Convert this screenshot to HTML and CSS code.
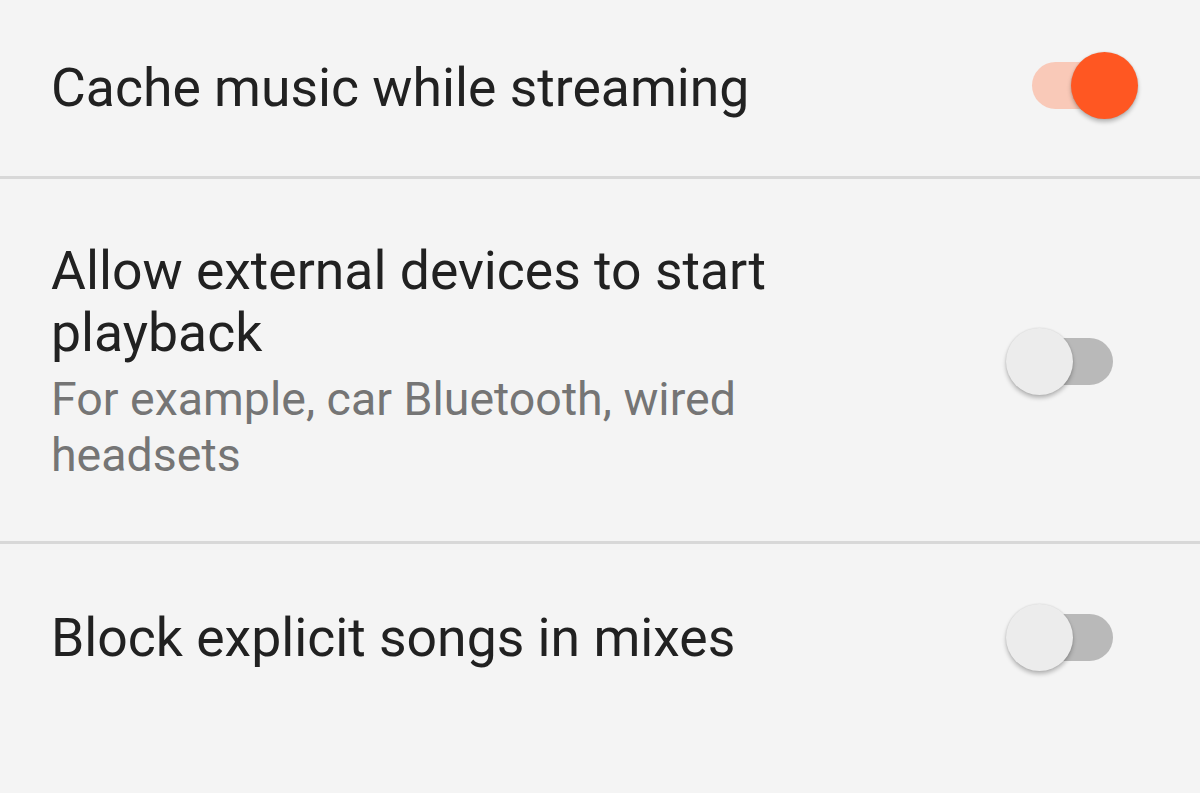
FILE: index.html
```html
<!DOCTYPE html>
<html lang="en">

<head>
    <meta charset="UTF-8">
    <meta name="viewport" content="width=device-width, initial-scale=1.0">
    <title>Settings</title>
    <link rel="stylesheet" href="styles.css">
</head>

<body>
    <div class="settings">
        <div class="setting">
            <div class="setting-text">
                <div class="setting-title">Cache music while streaming</div>
            </div>
            <div class="switch on"><span class="track"></span><span class="thumb"></span></div>
        </div>

        <div class="setting double">
            <div class="setting-text">
                <div class="setting-title">Allow external devices to start playback</div>
                <div class="setting-summary">For example, car Bluetooth, wired headsets</div>
            </div>
            <div class="switch"><span class="track"></span><span class="thumb"></span></div>
        </div>

        <div class="setting">
            <div class="setting-text">
                <div class="setting-title">Block explicit songs in mixes</div>
            </div>
            <div class="switch"><span class="track"></span><span class="thumb"></span></div>
        </div>
    </div>
</body>

</html>
```

FILE: styles.css
```css
body {
    font-family: Roboto, "Noto Sans", sans-serif;
    margin: 0;
    background-color: #f4f4f4;
    height: 100vh;
    overflow: hidden;
}

.setting {
    display: flex;
    align-items: center;
    padding: 57px 62px 57px 51px;
    border-bottom: 3px solid #d8d8d8;
}

.setting:last-child {
    border-bottom: none;
    padding-top: 60px;
}

.setting.double {
    padding-top: 61px;
    padding-bottom: 58px;
}

.setting-text {
    flex: 1;
    max-width: 790px;
}

.setting-title {
    font-size: 53.5px;
    line-height: 62px;
    color: #212121;
}

.setting-summary {
    font-size: 46.5px;
    line-height: 56px;
    color: #757575;
    margin-top: 7px;
}

/* switch: track with a round thumb that slides over it */
.switch {
    position: relative;
    width: 132px;
    height: 67px;
    margin-left: auto;
}

.switch .track {
    position: absolute;
    left: 26px;
    top: 10px;
    width: 81px;
    height: 47px;
    border-radius: 24px;
    background: #b9b9b9;
}

.switch .thumb {
    position: absolute;
    left: 0;
    top: 0;
    width: 67px;
    height: 67px;
    border-radius: 50%;
    background: #ececec;
    box-shadow: 0 3px 4px rgba(0, 0, 0, 0.25), 0 0 2px rgba(0, 0, 0, 0.12);
}

.switch.on {
    margin-top: -6px;
}

.switch.on .track {
    background: #f9c9b8;
}

.switch.on .thumb {
    left: 65px;
    background: #ff5722;
}
```
